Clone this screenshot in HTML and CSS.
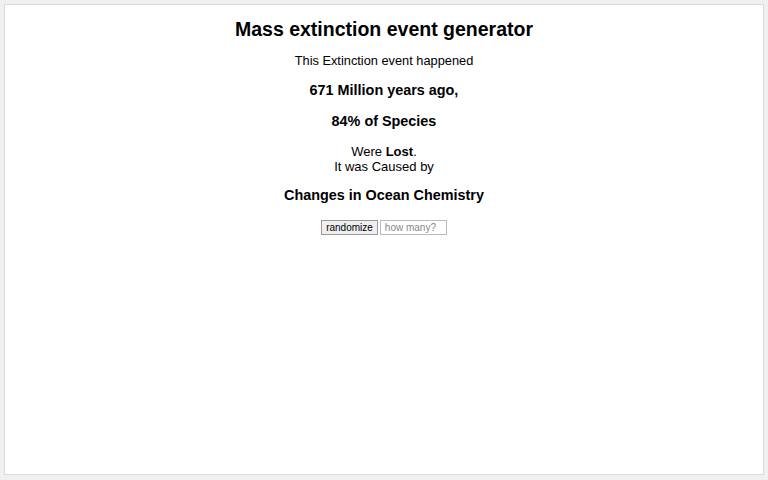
FILE: index.html
```html
<!DOCTYPE html>
<html lang="en">
<head>
    <title>Mass extinction event generator</title>
    <link rel="stylesheet" href="styles.css">
</head>
<body>
    <div class="page">
        <h1 class="title">Mass extinction event generator</h1>
        <p class="intro">This Extinction event happened</p>
        <h3 class="stat">671 Million years ago,</h3>
        <h3 class="stat">84% of Species</h3>
        <p class="lost">Were <b>Lost</b>.<br>It was Caused by</p>
        <h3 class="stat">Changes in Ocean Chemistry</h3>
        <div class="controls">
            <button class="rand-btn">randomize</button>
            <input class="count-input" type="text" placeholder="how many?">
        </div>
    </div>
</body>
</html>
```

FILE: styles.css
```css
body {
    font-family: "Liberation Sans", Arial, sans-serif;
    margin: 0;
    padding: 4px;
    background-color: #f0f0f0;
    color: #000;
}
.page {
    background-color: white;
    border: 1px solid #dcdcdc;
    height: 471px;
    box-sizing: border-box;
    text-align: center;
    padding-top: 13px;
}
.title {
    font-size: 19.5px;
    margin: 0 0 12px 0;
}
.intro {
    font-size: 12.8px;
    margin: 0 0 14px 0;
}
.stat {
    font-size: 14.4px;
    margin: 0 0 15px 0;
}
.lost {
    font-size: 13px;
    line-height: 15px;
    margin: 0 0 13px 0;
}
.controls {
    display: flex;
    justify-content: center;
    gap: 2px;
    margin-top: 17px;
}
.rand-btn {
    font-family: inherit;
    font-size: 10px;
    padding: 0 4px;
    height: 15px;
    border: 1px solid #999;
    background-color: #efefef;
    border-radius: 0;
}
.count-input {
    font-family: inherit;
    font-size: 10px;
    width: 67px;
    height: 15px;
    padding: 0 4px;
    border: 1px solid #bbb;
    box-sizing: border-box;
}
.count-input::placeholder {
    color: #888;
}
```
